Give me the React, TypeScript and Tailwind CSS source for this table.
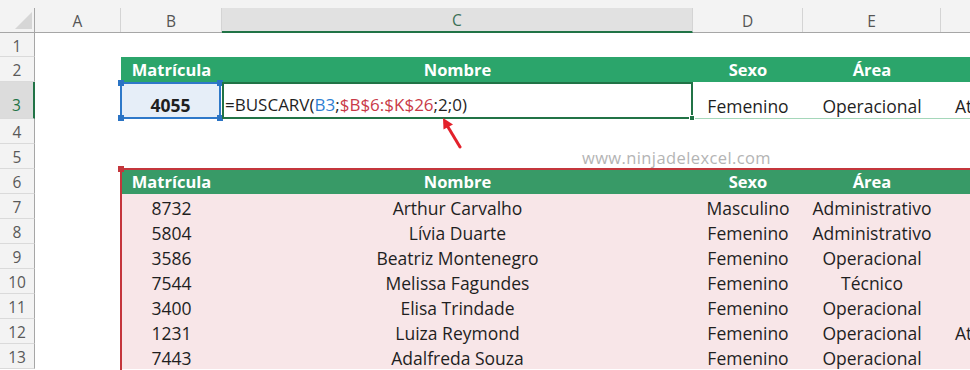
import React from "react";
import clsx from "clsx";

type RowData = {
  id: string;
  name: string;
  sex: string;
  area: string;
  extra?: string;
};

const people: RowData[] = [
  { id: "8732", name: "Arthur Carvalho", sex: "Masculino", area: "Administrativo" },
  { id: "5804", name: "Lívia Duarte", sex: "Femenino", area: "Administrativo" },
  { id: "3586", name: "Beatriz Montenegro", sex: "Femenino", area: "Operacional" },
  { id: "7544", name: "Melissa Fagundes", sex: "Femenino", area: "Técnico" },
  { id: "3400", name: "Elisa Trindade", sex: "Femenino", area: "Operacional" },
  { id: "1231", name: "Luiza Reymond", sex: "Femenino", area: "Operacional", extra: "Atención" },
  { id: "7443", name: "Adalfreda Souza", sex: "Femenino", area: "Operacional" },
];

function RowHead({ n, active = false, pad = "pb-[1px]" }: { n: number; active?: boolean; pad?: string }) {
  return (
    <div
      className={clsx(
        "w-[35px] shrink-0 flex items-end justify-center border-b border-b-[#dadada] text-[15.5px] leading-[20px]",
        pad,
        active
          ? "bg-[#dcdcdc] text-[#217346] border-r-2 border-r-[#217346]"
          : "bg-[#f3f3f3] text-[#595959] border-r border-r-[#a6a6a6]"
      )}
    >
      {n}
    </div>
  );
}

function ColHead({ label, w, active = false }: { label?: string; w: string; active?: boolean }) {
  return (
    <div
      className={clsx(
        "shrink-0 flex items-end justify-center pb-[1px] text-[15.5px] leading-[20px] border-r border-r-[#d4d4d4]",
        w,
        active ? "bg-[#e1e1e1] text-[#3a6f55] border-b-2 border-b-[#217346] -mb-[1px]" : "text-[#555555]"
      )}
    >
      {label}
    </div>
  );
}

function Cell({ w, className, children }: { w: string; className?: string; children?: React.ReactNode }) {
  return (
    <div className={clsx("shrink-0 flex items-end justify-center whitespace-nowrap leading-[20px]", w, className)}>
      {children}
    </div>
  );
}

function Handle({ pos, color }: { pos: string; color: string }) {
  return <span className={clsx("absolute w-[6px] h-[6px]", pos, color)} />;
}

export default function App() {
  return (
    <div className="relative w-[970px] h-[370px] overflow-hidden bg-white font-['Open_Sans',sans-serif] text-[17.5px] text-[#1f1f1f]">
      {/* top strip above the column letters */}
      <div className="h-[8px] bg-[#f3f3f3]" />

      {/* column letters */}
      <div className="flex h-[25px] bg-[#f3f3f3] border-b border-b-[#a6a6a6]">
        <div className="relative w-[35px] shrink-0 border-r border-r-[#a6a6a6]">
          <svg className="absolute left-[15px] top-[4px]" width="17" height="17" viewBox="0 0 17 17">
            <polygon points="17,0 17,17 0,17" fill="#d6d6d6" />
          </svg>
        </div>
        <ColHead label="A" w="w-[86px]" />
        <ColHead label="B" w="w-[101px]" />
        <ColHead label="C" w="w-[471px]" active />
        <ColHead label="D" w="w-[110px]" />
        <ColHead label="E" w="w-[138px]" />
        <ColHead w="w-[140px]" />
      </div>

      {/* row 1 */}
      <div className="flex h-[24px]">
        <RowHead n={1} pad="pb-0" />
      </div>

      {/* row 2: lookup header */}
      <div className="flex h-[25px]">
        <RowHead n={2} />
        <Cell w="w-[86px]" />
        <div className="flex bg-[#2ba56b] text-white font-bold text-[16.5px]">
          <Cell w="w-[101px]" className="pb-[2px]">Matrícula</Cell>
          <Cell w="w-[471px]" className="pb-[2px]">Nombre</Cell>
          <Cell w="w-[110px]" className="pb-[2px]">Sexo</Cell>
          <Cell w="w-[138px]" className="pb-[2px]">Área</Cell>
          <Cell w="w-[140px]" />
        </div>
      </div>

      {/* row 3: lookup input + formula being edited */}
      <div className="flex h-[37px]">
        <RowHead n={3} active pad="pb-[3px]" />
        <Cell w="w-[86px]" />
        <div className="relative w-[101px] shrink-0 -ml-[1px] mr-[1px] flex items-end justify-center pb-[2px] leading-[20px] bg-[#e6eef8] border-2 border-[#2e78c9] font-bold">
          4055
          <Handle pos="-left-[4px] -top-[4px]" color="bg-[#2a73c4]" />
          <Handle pos="-right-[4px] -top-[4px]" color="bg-[#2a73c4]" />
          <Handle pos="-left-[4px] -bottom-[4px]" color="bg-[#2a73c4]" />
          <Handle pos="-right-[4px] -bottom-[4px]" color="bg-[#2a73c4]" />
        </div>
        <div className="relative w-[471px] shrink-0 flex items-end pl-[1px] pb-[2px] leading-[20px] text-[17px] border-2 border-[#217346] whitespace-nowrap">
          <span>=BUSCARV(</span>
          <span className="text-[#2f7fd3]">B3</span>
          <span>;</span>
          <span className="text-[#c93a48]">$B$6:$K$26</span>
          <span>;2;0)</span>
          <span className="absolute -right-[4px] -bottom-[4px] w-[6px] h-[6px] bg-[#217346] border border-white" />
        </div>
        <Cell w="w-[110px]" className="pb-[2px] border-b border-b-[#a5d7ba]">Femenino</Cell>
        <Cell w="w-[138px]" className="pb-[2px] border-b border-b-[#a5d7ba]">Operacional</Cell>
        <Cell w="w-[140px]" className="pb-[2px] border-b border-b-[#a5d7ba] justify-start pl-[14px]">Atención</Cell>
      </div>

      {/* row 4 */}
      <div className="flex h-[25px]">
        <RowHead n={4} />
      </div>

      {/* row 5: site address */}
      <div className="flex h-[25px]">
        <RowHead n={5} />
        <Cell w="w-[86px]" />
        <Cell w="w-[101px]" />
        <Cell w="w-[581px]" className="justify-end pr-[32px] pb-[1px] text-[16.5px] tracking-[0.4px] text-[#b4b4b4]">
          www.ninjadelexcel.com
        </Cell>
      </div>

      {/* row 6: source table header */}
      <div className="flex h-[25px]">
        <RowHead n={6} />
        <Cell w="w-[86px]" />
        <div className="flex bg-[#389a67] text-white font-bold text-[16.5px]">
          <Cell w="w-[101px]" className="pb-[2px]">Matrícula</Cell>
          <Cell w="w-[471px]" className="pb-[2px]">Nombre</Cell>
          <Cell w="w-[110px]" className="pb-[2px]">Sexo</Cell>
          <Cell w="w-[138px]" className="pb-[2px]">Área</Cell>
          <Cell w="w-[140px]" />
        </div>
      </div>

      {/* rows 7-13: source table body */}
      {people.map((p, i) => (
        <div key={p.id} className="flex h-[25px]">
          <RowHead n={7 + i} />
          <Cell w="w-[86px]" />
          <div className="flex bg-[#f8e6e8]">
            <Cell w="w-[101px]" className="pb-[1px]">{p.id}</Cell>
            <Cell w="w-[471px]" className="pb-[1px]">{p.name}</Cell>
            <Cell w="w-[110px]" className="pb-[1px]">{p.sex}</Cell>
            <Cell w="w-[138px]" className="pb-[1px]">{p.area}</Cell>
            <Cell w="w-[140px]" className="pb-[1px] justify-start pl-[14px]">{p.extra ?? ""}</Cell>
          </div>
        </div>
      ))}

      {/* referenced range outline ($B$6:$K$26) */}
      <div className="pointer-events-none absolute left-[120px] top-[168px] w-[900px] h-[240px] border-2 border-[#c4363c]">
        <span className="absolute -left-[4px] -top-[4px] w-[6px] h-[6px] bg-[#c4363c]" />
      </div>

      {/* pointer arrow at the column index argument */}
      <svg className="pointer-events-none absolute left-[436px] top-[114px]" width="30" height="38" viewBox="0 0 30 38">
        <line x1="24" y1="33" x2="12" y2="13" stroke="#e3212b" strokeWidth="3" strokeLinecap="round" />
        <polygon points="7,4 17,10.5 7.5,15.5" fill="#e3212b" />
      </svg>
    </div>
  );
}
